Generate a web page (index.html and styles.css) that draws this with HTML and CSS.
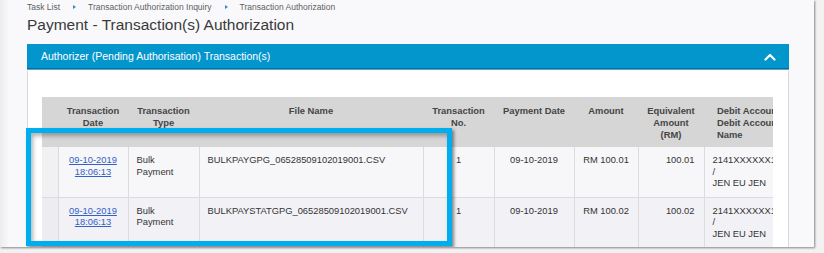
FILE: index.html
```html
<!DOCTYPE html>
<html>
<head>
<meta charset="utf-8">
<link rel="stylesheet" href="styles.css">
</head>
<body>
<div class="screen">
  <div class="content">
    <div class="crumbs">
      <span>Task List</span><span class="sep"></span>
      <span>Transaction Authorization Inquiry</span><span class="sep"></span>
      <span>Transaction Authorization</span>
    </div>
    <h1 class="title">Payment - Transaction(s) Authorization</h1>
    <div class="bar">
      <span class="bar-title">Authorizer (Pending Authorisation) Transaction(s)</span>
      <svg class="chev" width="12" height="8" viewBox="0 0 12 8"><polyline points="1.5,6.5 6,2 10.5,6.5" fill="none" stroke="#fff" stroke-width="2.2" stroke-linecap="round" stroke-linejoin="round"/></svg>
    </div>
    <div class="panel">
      <div class="table-wrap">
        <table class="grid">
          <colgroup>
            <col class="c0"><col class="c1"><col class="c2"><col class="c3"><col class="c4"><col class="c5"><col class="c6"><col class="c7"><col class="c8">
          </colgroup>
          <thead>
            <tr>
              <th></th>
              <th>Transaction<br>Date</th>
              <th>Transaction<br>Type</th>
              <th>File Name</th>
              <th>Transaction<br>No.</th>
              <th>Payment Date</th>
              <th>Amount</th>
              <th>Equivalent<br>Amount<br>(RM)</th>
              <th class="left-ish">Debit Account /<br>Debit Account<br>Name</th>
            </tr>
          </thead>
          <tbody>
            <tr class="r1">
              <td class="sel"></td>
              <td class="center"><a href="#">09-10-2019<br>18:06:13</a></td>
              <td>Bulk<br>Payment</td>
              <td>BULKPAYGPG_06528509102019001.CSV</td>
              <td class="center">1</td>
              <td class="center">09-10-2019</td>
              <td class="center">RM 100.01</td>
              <td class="right">100.01</td>
              <td class="acct">2141XXXXXX1234<br>/<br>JEN EU JEN</td>
            </tr>
            <tr class="r2">
              <td class="sel"></td>
              <td class="center"><a href="#">09-10-2019<br>18:06:13</a></td>
              <td>Bulk<br>Payment</td>
              <td>BULKPAYSTATGPG_06528509102019001.CSV</td>
              <td class="center">1</td>
              <td class="center">09-10-2019</td>
              <td class="center">RM 100.02</td>
              <td class="right">100.02</td>
              <td class="acct">2141XXXXXX1234<br>/<br>JEN EU JEN</td>
            </tr>
            <tr class="r1">
              <td class="sel"></td>
              <td></td><td></td><td></td><td></td><td></td><td></td><td></td><td></td>
            </tr>
          </tbody>
        </table>
      </div>
    </div>
  </div>
  <div class="highlight"></div>
</div>
</body>
</html>
```

FILE: styles.css
```css
html, body {
  margin: 0;
  padding: 0;
}
body {
  width: 824px;
  height: 253px;
  overflow: hidden;
  background: #f2f2f2;
  font-family: "Liberation Sans", Arial, sans-serif;
}
.screen {
  position: relative;
  width: 814px;
  height: 247px;
  overflow: hidden;
  background: linear-gradient(to right, #ececee 0px, #f9f9fb 9px, #f9f9fb 100%);
  box-shadow: 1px 1px 2px rgba(0,0,0,0.45);
}
.content {
  padding-left: 27px;
  width: 762px;
}
.crumbs {
  padding-top: 1px;
  line-height: 12px;
  font-size: 8.5px;
  color: #5f5f5f;
  display: flex;
  align-items: center;
  white-space: nowrap;
}
.sep {
  display: inline-block;
  width: 0;
  height: 0;
  border-left: 3px solid #2b8fcb;
  border-top: 2px solid transparent;
  border-bottom: 2px solid transparent;
  margin: 0 12px 0 13px;
}
.title {
  margin: 2px 0 0 0;
  font-size: 15.5px;
  line-height: 20px;
  font-weight: normal;
  color: #3a3a3a;
  white-space: nowrap;
}
.bar {
  margin-top: 9px;
  height: 24px;
  background: #0396cd;
  border-bottom: 1px solid #086e98;
  box-shadow: 0 1px 0 #5ca6cc;
  display: flex;
  align-items: center;
  justify-content: space-between;
  padding: 0 13px 0 14px;
}
.bar-title {
  color: #fff;
  font-size: 10.5px;
  line-height: 12px;
}
.chev {
  display: block;
  margin-top: 2px;
}
.panel {
  margin-top: 2px;
  background: #fff;
  border-left: 1px solid #d9d9d9;
  border-right: 1px solid #d9d9d9;
  padding: 26px 0 0 14px;
  height: 160px;
}
.table-wrap {
  width: 731px;
  overflow: hidden;
}
.grid {
  border-collapse: collapse;
  table-layout: fixed;
  width: 830px;
  font-size: 9.35px;
  color: #333;
}
.c0 { width: 16px; }
.c1 { width: 70px; }
.c2 { width: 71px; }
.c3 { width: 224px; }
.c4 { width: 71px; }
.c5 { width: 80px; }
.c6 { width: 64px; }
.c7 { width: 66px; }
.c8 { width: 168px; }
.grid th {
  background: #d6d6d6;
  color: #454545;
  font-weight: bold;
  font-size: 9.4px;
  line-height: 12px;
  height: 50px;
  padding: 8px 4px 0 4px;
  vertical-align: top;
  text-align: center;
  box-sizing: border-box;
}
.grid th.left-ish {
  text-align: left;
  padding-left: 13px;
}
.grid td {
  height: 50px;
  box-sizing: border-box;
  vertical-align: top;
  padding: 8px 8px 0 8px;
  line-height: 11.7px;
  border-left: 1px solid #dcdcdf;
  border-bottom: 1px solid #dcdcdf;
  white-space: nowrap;
  overflow: hidden;
}
.grid td:first-child { border-left: none; }
.r1 td { background: #f7f7fa; }
.r2 td { background: #f1f1f6; }
.r1 td.sel { background: #f1f1f4; }
.r2 td.sel { background: #ececf1; }
.center { text-align: center; }
.right { text-align: right; }
.grid td.right { padding-right: 9px; }
.grid a {
  color: #3461c4;
  text-decoration: underline;
}
.highlight {
  position: absolute;
  left: 26px;
  top: 128px;
  width: 426px;
  height: 118px;
  box-sizing: border-box;
  border: 5px solid #00aeef;
  box-shadow: 2px 2px 3px rgba(0,0,0,0.45), inset 2px 3px 4px rgba(0,0,0,0.3);
}
```
